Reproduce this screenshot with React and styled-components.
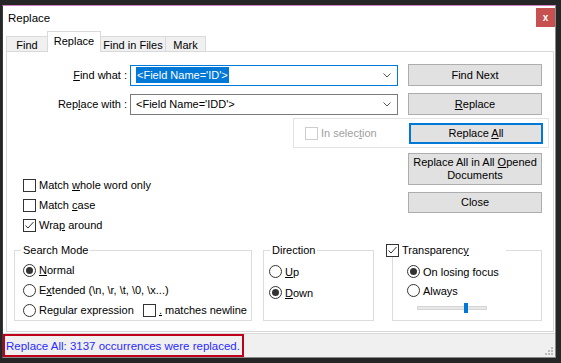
import React from 'react';
import styled, { createGlobalStyle, css } from 'styled-components';

const GlobalStyle = createGlobalStyle`
  html, body {
    margin: 0;
    padding: 0;
    background: #262626;
  }
  body {
    font-family: "Liberation Sans", Arial, sans-serif;
    font-size: 11px;
    color: #000;
  }
  #root {
    box-sizing: border-box;
    width: 561px;
    height: 363px;
    padding: 5px 0 0 2px;
    overflow: hidden;
  }
`;

const Window = styled.div`
  box-sizing: border-box;
  width: 554px;
  height: 353px;
  background: #fff;
  border: 1px solid #8a8a8a;
  border-top-color: #d680c3;
  border-left-color: #3a3a3a;
  display: flex;
  flex-direction: column;
`;

const TitleBar = styled.div`
  height: 25px;
  display: flex;
  align-items: flex-start;
  justify-content: space-between;
  padding-left: 5px;
`;

const Title = styled.span`
  line-height: 25px;
  font-size: 11.5px;
`;

const CloseButton = styled.div`
  width: 19px;
  height: 19px;
  margin-top: 2px;
  background: #c75050;
  color: #fff;
  font-weight: bold;
  font-size: 10px;
  display: flex;
  align-items: center;
  justify-content: center;
`;

const TabStrip = styled.div`
  position: relative;
  z-index: 1;
  height: 20px;
  display: flex;
  align-items: flex-end;
  padding-left: 3px;
`;

const Tab = styled.div`
  box-sizing: border-box;
  width: ${p => p.$w}px;
  height: 15px;
  margin-left: -1px;
  border: 1px solid #d9d9d9;
  border-bottom: none;
  background: #f0f0f0;
  display: flex;
  align-items: center;
  justify-content: center;
  padding-top: 1px;
  white-space: nowrap;
  &:first-child {
    margin-left: 0;
  }
  ${p => p.$active && css`
    height: 21px;
    margin-bottom: -1px;
    background: #fff;
    padding-top: 0;
    padding-bottom: 2px;
  `}
`;

const Panel = styled.div`
  box-sizing: border-box;
  margin-left: 3px;
  width: 548px;
  height: 281px;
  border: 1px solid #d9d9d9;
  padding-top: 12px;
`;

const FieldRow = styled.div`
  display: flex;
  align-items: center;
  height: 22px;
  & + & {
    margin-top: 7px;
  }
`;

const FieldLabel = styled.label`
  width: 120px;
  text-align: right;
`;

const Combo = styled.div`
  box-sizing: border-box;
  width: 268px;
  height: 21px;
  margin-left: 3px;
  margin-right: 10px;
  border: 1px solid ${p => (p.$focused ? '#0078d7' : '#7a7a7a')};
  display: flex;
  align-items: center;
  padding: 0 6px 0 5px;
`;

const ComboValue = styled.span`
  flex: 1;
  white-space: nowrap;
`;

const Selected = styled.span`
  background: #0078d7;
  color: #fff;
  padding: 2px 1px 2px;
`;

const ButtonFace = styled.div`
  box-sizing: border-box;
  width: 134px;
  height: ${p => p.$h || 22}px;
  border: ${p => (p.$focused ? '2px solid #0078d7' : '1px solid #adadad')};
  background: #e1e1e1;
  display: flex;
  align-items: center;
  justify-content: center;
  text-align: center;
  line-height: 13px;
  flex-shrink: 0;
`;

const Button = ({ h, focused, children }) => (
  <ButtonFace $h={h} $focused={focused}>
    <span>{children}</span>
  </ButtonFace>
);

const SelectionGroup = styled.div`
  box-sizing: border-box;
  margin: 3px 0 0 286px;
  width: 256px;
  height: 30px;
  border: 1px solid #e3e3e3;
  display: flex;
  align-items: center;
  justify-content: space-between;
  padding: 0 5px 0 11px;
`;

const Middle = styled.div`
  display: flex;
  margin-top: 1px;
`;

const OptionColumn = styled.div`
  padding: 26px 0 0 16px;
`;

const ButtonColumn = styled.div`
  margin-left: auto;
  margin-right: 11px;
  padding-top: 4px;
  display: flex;
  flex-direction: column;
  gap: 7px;
`;

const Option = styled.div`
  display: flex;
  align-items: center;
  gap: 3px;
  height: ${p => p.$h || 20}px;
  color: ${p => (p.$disabled ? '#a0a0a0' : '#000')};
  white-space: nowrap;
`;

const Box = styled.span`
  box-sizing: border-box;
  width: 13px;
  height: 13px;
  flex-shrink: 0;
  border: 1px solid ${p => (p.$disabled ? '#cccccc' : '#333')};
  background: #fff;
  display: flex;
  align-items: center;
  justify-content: center;
`;

const Radio = styled.span`
  box-sizing: border-box;
  width: 13px;
  height: 13px;
  flex-shrink: 0;
  border-radius: 50%;
  border: 1px solid #333;
  display: flex;
  align-items: center;
  justify-content: center;
  &::after {
    content: '';
    width: 7px;
    height: 7px;
    border-radius: 50%;
    background: #333;
    display: ${p => (p.$checked ? 'block' : 'none')};
  }
`;

const Key = styled.span`
  text-decoration: underline;
  text-underline-offset: 1px;
`;

const Groups = styled.div`
  display: flex;
  margin-top: 8px;
  padding-left: 7px;
`;

const Group = styled.fieldset`
  box-sizing: border-box;
  margin: 0 0 0 ${p => p.$ml || 0}px;
  width: ${p => p.$w}px;
  height: 78px;
  min-width: 0;
  border: 1px solid #dcdcdc;
  padding: 0;
`;

const GroupBody = styled.div`
  padding: ${p => p.$pt}px ${p => p.$pr || 0}px 0 ${p => p.$pl}px;
`;

const Legend = styled.legend`
  margin-left: ${p => p.$ml}px;
  padding: 0 2px;
  line-height: 14px;
`;

const CheckLegend = styled.legend`
  box-sizing: border-box;
  margin-left: -7px;
  width: 120px;
  padding: 0;
  line-height: 14px;
  background: #fff;
  display: flex;
  align-items: center;
  gap: 3px;
`;

const Push = styled.div`
  margin-left: auto;
  display: flex;
  align-items: center;
  gap: 3px;
`;

const Slider = styled.div`
  position: relative;
  box-sizing: border-box;
  margin: 6px 0 0 10px;
  width: 70px;
  height: 4px;
  background: #e7e7e7;
  border: 1px solid #d6d6d6;
`;

const Thumb = styled.div`
  position: absolute;
  left: 46px;
  top: -4px;
  width: 4px;
  height: 10px;
  background: #0078d7;
`;

const StatusBar = styled.div`
  box-sizing: border-box;
  margin-top: 1px;
  height: 24px;
  border-top: 1px solid #dadada;
  background: #f0f0f0;
  display: flex;
`;

const StatusText = styled.div`
  box-sizing: border-box;
  width: 241px;
  border: 2px solid #c0001a;
  color: #2b2bff;
  font-size: 11.5px;
  padding-left: 1px;
  display: flex;
  align-items: center;
  white-space: nowrap;
`;

const Grip = styled.svg`
  margin: auto 1px 1px auto;
`;

const Check = () => (
  <svg width="11" height="11" viewBox="0 0 11 11">
    <polyline points="1.5,5.5 4,8 9.5,2" fill="none" stroke="#333" strokeWidth="1" />
  </svg>
);

const Chevron = () => (
  <svg width="8" height="5" viewBox="0 0 8 5">
    <polyline points="0.5,0.5 4,4 7.5,0.5" fill="none" stroke="#555" strokeWidth="1" />
  </svg>
);

const CheckOption = ({ checked, disabled, children }) => (
  <Option $disabled={disabled}>
    <Box $disabled={disabled}>{checked && <Check />}</Box>
    <span>{children}</span>
  </Option>
);

const RadioOption = ({ checked, h, children }) => (
  <Option $h={h}>
    <Radio $checked={checked} />
    <span>{children}</span>
  </Option>
);

export default function App() {
  return (
    <>
      <GlobalStyle />
      <Window>
        <TitleBar>
          <Title>Replace</Title>
          <CloseButton>x</CloseButton>
        </TitleBar>

        <TabStrip>
          <Tab $w={42}>Find</Tab>
          <Tab $w={54} $active>Replace</Tab>
          <Tab $w={66}>Find in Files</Tab>
          <Tab $w={41}>Mark</Tab>
        </TabStrip>

        <Panel>
          <FieldRow>
            <FieldLabel><Key>F</Key>ind what :</FieldLabel>
            <Combo $focused>
              <ComboValue><Selected>&lt;Field Name='ID'&gt;</Selected></ComboValue>
              <Chevron />
            </Combo>
            <Button>Find Next</Button>
          </FieldRow>
          <FieldRow>
            <FieldLabel>Rep<Key>l</Key>ace with :</FieldLabel>
            <Combo>
              <ComboValue>&lt;Field Name='IDD'&gt;</ComboValue>
              <Chevron />
            </Combo>
            <Button><Key>R</Key>eplace</Button>
          </FieldRow>

          <SelectionGroup>
            <CheckOption disabled>In selec<Key>t</Key>ion</CheckOption>
            <Button h={21} focused>Replace <Key>A</Key>ll</Button>
          </SelectionGroup>

          <Middle>
            <OptionColumn>
              <CheckOption>Match <Key>w</Key>hole word only</CheckOption>
              <CheckOption>Match <Key>c</Key>ase</CheckOption>
              <CheckOption checked>Wra<Key>p</Key> around</CheckOption>
            </OptionColumn>
            <ButtonColumn>
              <Button h={32}>Replace All in All <Key>O</Key>pened<br />Documents</Button>
              <Button h={21}>Close</Button>
            </ButtonColumn>
          </Middle>

          <Groups>
            <Group $w={238}>
              <Legend $ml={6}>Search Mode</Legend>
              <GroupBody $pt={3} $pr={4} $pl={8}>
                <RadioOption checked><Key>N</Key>ormal</RadioOption>
                <RadioOption>E<Key>x</Key>tended (\n, \r, \t, \0, \x...)</RadioOption>
                <Option>
                  <Radio />
                  <span>Re<Key>g</Key>ular expression</span>
                  <Push>
                    <Box />
                    <span><Key>.</Key> matches newline</span>
                  </Push>
                </Option>
              </GroupBody>
            </Group>

            <Group $w={111} $ml={11}>
              <Legend $ml={6}>Direction</Legend>
              <GroupBody $pt={4} $pl={5}>
                <RadioOption h={21}><Key>U</Key>p</RadioOption>
                <RadioOption h={21} checked><Key>D</Key>own</RadioOption>
              </GroupBody>
            </Group>

            <Group $w={150} $ml={18}>
              <CheckLegend>
                <Box><Check /></Box>
                <span>Transparenc<Key>y</Key></span>
              </CheckLegend>
              <GroupBody $pt={5} $pl={14}>
                <RadioOption h={19} checked>On losing focus</RadioOption>
                <RadioOption h={19}>Always</RadioOption>
                <Slider>
                  <Thumb />
                </Slider>
              </GroupBody>
            </Group>
          </Groups>
        </Panel>

        <StatusBar>
          <StatusText>Replace All: 3137 occurrences were replaced.</StatusText>
          <Grip width="9" height="9" viewBox="0 0 9 9">
            <g fill="#bdbdbd">
              <rect x="6" y="0" width="2" height="2" />
              <rect x="3" y="3" width="2" height="2" />
              <rect x="6" y="3" width="2" height="2" />
              <rect x="0" y="6" width="2" height="2" />
              <rect x="3" y="6" width="2" height="2" />
              <rect x="6" y="6" width="2" height="2" />
            </g>
          </Grip>
        </StatusBar>
      </Window>
    </>
  );
}
